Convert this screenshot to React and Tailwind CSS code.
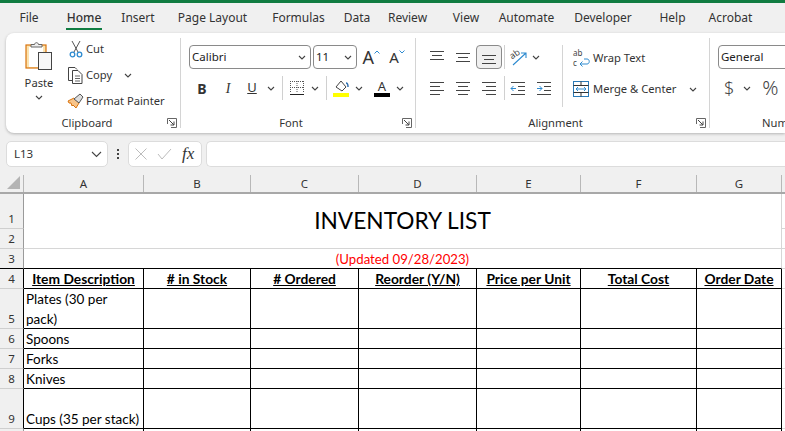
import React from 'react';

const TABS = [
  { label: 'File', cls: 'ml-[20px] w-[18px]' },
  { label: 'Home', cls: 'ml-[28px] w-[36px]', active: true },
  { label: 'Insert', cls: 'ml-[20px] w-[32px]' },
  { label: 'Page Layout', cls: 'ml-[23px] w-[71px]' },
  { label: 'Formulas', cls: 'ml-[22px] w-[57px]' },
  { label: 'Data', cls: 'ml-[18px] w-[24px]' },
  { label: 'Review', cls: 'ml-[18px] w-[41px]' },
  { label: 'View', cls: 'ml-[24px] w-[28px]' },
  { label: 'Automate', cls: 'ml-[21px] w-[51px]' },
  { label: 'Developer', cls: 'ml-[20px] w-[62px]' },
  { label: 'Help', cls: 'ml-[25px] w-[27px]' },
  { label: 'Acrobat', cls: 'ml-[21px] w-[47px]' },
];

const HEADERS = ['# in Stock', '# Ordered', 'Reorder (Y/N)', 'Price per Unit', 'Total Cost', 'Order Date'];

const ROWS = [
  { n: 5, text: 'Plates (30 per pack)', wrap: true },
  { n: 6, text: 'Spoons' },
  { n: 7, text: 'Forks' },
  { n: 8, text: 'Knives' },
  { n: 9, text: 'Cups (35 per stack)' },
];

function Chevron({ className = '' }) {
  return (
    <svg width="8" height="5" viewBox="0 0 8 5" className={`shrink-0 ${className}`}>
      <path d="M1 1l3 3 3-3" fill="none" stroke="#444" strokeWidth="1.1" />
    </svg>
  );
}

function Launcher() {
  return (
    <svg width="10" height="10" viewBox="0 0 10 10" className="absolute right-[3px] top-[5px]">
      <path d="M.5 6V.5H9.500V9.500H4" fill="none" stroke="#666" />
      <path d="M2 2l5 5M7 3.500V7H3.500" fill="none" stroke="#444" />
    </svg>
  );
}

function Lines({ rows }) {
  return (
    <svg width="16" height="16" viewBox="0 0 16 16">
      {rows.map(([x1, x2, y]) => (
        <path key={y} d={`M${x1} ${y}.5H${x2}`} stroke="#444" />
      ))}
    </svg>
  );
}

function GroupLabel({ label, launcher = true, className = '' }) {
  return (
    <div className={`relative h-[20px] shrink-0 text-[11.2px] leading-[20px] text-[#333] ${className}`}>
      {label}
      {launcher && <Launcher />}
    </div>
  );
}

function Clipboard() {
  return (
    <div className="flex h-full w-[174px] shrink-0 flex-col">
      <div className="flex min-h-0 flex-1">
        <div className="ml-[16px] flex w-[34px] flex-col items-center pt-[8px]">
          <svg width="28" height="29" viewBox="0 0 28 29">
            <rect x="1" y="4" width="20" height="23" fill="#fbe3b0" stroke="#d9730d" strokeWidth="1.2" />
            <rect x="4" y="6" width="14" height="20" fill="#fff" />
            <path d="M6 6V3.500h3.500c.5-2.500 3.500-2.500 4 0H17V6z" fill="#eee" stroke="#666" />
            <rect x="13.500" y="11.500" width="13" height="17" fill="#f7f7f7" stroke="#444" />
          </svg>
          <span className="mt-[5px] text-[11.2px] leading-[16px] text-[#333]">Paste</span>
          <Chevron className="mt-[4px]" />
        </div>
        <div className="ml-[13px] flex flex-col pt-[3px] text-[11.2px] text-[#333]">
          <div className="flex h-[26px] shrink-0 items-center">
            <svg width="14" height="18" viewBox="0 0 14 18" className="mr-[3px]">
              <path d="M3 1l6 11M11 1L5 12" stroke="#555" fill="none" />
              <circle cx="3.500" cy="14.500" r="2.300" fill="none" stroke="#2e8bd0" strokeWidth="1.300" />
              <circle cx="10.500" cy="14.500" r="2.300" fill="none" stroke="#2e8bd0" strokeWidth="1.300" />
            </svg>
            Cut
          </div>
          <div className="flex h-[26px] shrink-0 items-center">
            <svg width="15" height="17" viewBox="0 0 15 17" className="mr-[3px] -ml-[1px]">
              <path d="M5 13.500H.5V.5H7l2 2" fill="none" stroke="#444" />
              <path d="M4.500 3.500H10l4 4v9H4.500z" fill="#fff" stroke="#444" />
              <path d="M7 9h5M7 11.500h5M7 14h5" stroke="#666" />
            </svg>
            Copy
            <Chevron className="ml-[12px]" />
          </div>
          <div className="flex h-[26px] shrink-0 items-center">
            <svg width="17" height="16" viewBox="0 0 17 16" className="mr-[2px] -ml-[2px]">
              <path d="M1 8l6-3 5 5-3 5-3-3-1 1-1-3-2 0z" fill="#f7c48a" stroke="#d9730d" />
              <path d="M7 6l6-5 3 3-4 6z" fill="#ddd" stroke="#555" />
            </svg>
            Format Painter
          </div>
        </div>
      </div>
      <GroupLabel label="Clipboard" className="pr-[12px] text-center" />
    </div>
  );
}

function Divider() {
  return <div className="my-[5px] w-px shrink-0 bg-[#d4d4d4]" />;
}

function InnerSep() {
  return <div className="ml-[7px] mr-[5px] h-[24px] w-px shrink-0 bg-[#d0d0d0]" />;
}

function Combo({ children, className = '' }) {
  return (
    <div className={`flex h-[24px] items-center justify-between rounded-[4px] border border-[#8a8a8a] pl-[2px] pr-[4px] text-[11.5px] text-[#222] ${className}`}>
      {children}
    </div>
  );
}

function Font() {
  return (
    <div className="flex h-full w-[234px] shrink-0 flex-col">
      <div className="min-h-0 flex-1 pl-[8px] pt-[12px]">
        <div className="flex items-center">
          <Combo className="w-[123px]">
            Calibri
            <Chevron />
          </Combo>
          <Combo className="ml-[2px] w-[44px]">
            11
            <Chevron />
          </Combo>
          <div className="ml-[6px] flex w-[27px] items-start text-[18px] leading-[22px] text-[#333]">
            A
            <svg width="6" height="4" viewBox="0 0 6 4" className="mt-[4px]">
              <path d="M.5 3.500L3 1l2.500 2.500" fill="none" stroke="#2e8bd0" />
            </svg>
          </div>
          <div className="flex w-[26px] items-start text-[15px] leading-[22px] text-[#333]">
            A
            <svg width="6" height="4" viewBox="0 0 6 4" className="mt-[4px]">
              <path d="M.5.5L3 3 5.500.5" fill="none" stroke="#2e8bd0" />
            </svg>
          </div>
        </div>
        <div className="mt-[7px] flex h-[24px] items-center text-[#333]">
          <span className="w-[26px] text-center text-[14px] font-bold">B</span>
          <span className="w-[26px] text-center font-['Liberation_Serif',serif] text-[14px] italic">I</span>
          <span className="ml-[2px] w-[18px] text-center text-[13px] underline">U</span>
          <Chevron className="ml-[6px]" />
          <InnerSep />
          <svg width="16" height="16" viewBox="0 0 16 16" className="ml-[1px]">
            <path d="M1.500 1v12M8 1v12M14.500 1v12M1 1.500h14M1 7.500h14" stroke="#555" strokeDasharray="1 1" />
            <path d="M1 14.500h14" stroke="#222" />
          </svg>
          <Chevron className="ml-[6px]" />
          <InnerSep />
          <svg width="17" height="18" viewBox="0 0 17 18" className="ml-[1px]">
            <path d="M3 8l5-6 5 6-4 4z" fill="none" stroke="#444" />
            <path d="M13 4c2 0 2 2 2 4" fill="none" stroke="#2e6fb0" strokeWidth="1.500" />
            <rect x="0" y="14" width="16" height="4" fill="#ffff00" />
          </svg>
          <Chevron className="ml-[5px]" />
          <div className="ml-[11px] flex w-[16px] flex-col items-center">
            <span className="text-[13px] leading-[14px]">A</span>
            <span className="h-[4px] w-[16px] bg-black" />
          </div>
          <Chevron className="ml-[6px]" />
        </div>
      </div>
      <GroupLabel label="Font" className="pr-[14px] text-center" />
    </div>
  );
}

function AlignBtn({ rows, selected }) {
  return (
    <div className={`flex h-[24px] w-[26px] items-center justify-center ${selected ? 'rounded-[4px] border border-[#8a8a8a] bg-[#f0f0f0]' : ''}`}>
      <Lines rows={rows} />
    </div>
  );
}

function Alignment() {
  return (
    <div className="flex h-full w-[293px] shrink-0 flex-col">
      <div className="flex min-h-0 flex-1 pl-[8px] pt-[12px]">
        <div className="w-[138px]">
          <div className="flex items-center">
            <AlignBtn rows={[[1, 15, 2], [3, 13, 6], [1, 15, 10]]} />
            <AlignBtn rows={[[1, 15, 4], [3, 13, 8], [1, 15, 12]]} />
            <AlignBtn selected rows={[[1, 15, 6], [3, 13, 10], [1, 15, 14]]} />
            <div className="ml-[2px] mr-[5px] h-[24px] w-px bg-[#d0d0d0]" />
            <svg width="18" height="18" viewBox="0 0 18 18" className="overflow-visible">
              <text x="1" y="10" fontSize="9" fill="#444" transform="rotate(-35 4 9)" fontFamily="Noto Sans">ab</text>
              <path d="M3 17L16 5M11 5h5v5" fill="none" stroke="#2e8bd0" strokeWidth="1.100" />
            </svg>
            <Chevron className="ml-[4px]" />
          </div>
          <div className="mt-[7px] flex items-center">
            <AlignBtn rows={[[1, 15, 2], [1, 11, 6], [1, 15, 10], [1, 11, 14]]} />
            <AlignBtn rows={[[1, 15, 2], [3, 13, 6], [1, 15, 10], [3, 13, 14]]} />
            <AlignBtn rows={[[1, 15, 2], [5, 15, 6], [1, 15, 10], [5, 15, 14]]} />
            <div className="ml-[2px] mr-[5px] h-[24px] w-px bg-[#d0d0d0]" />
            <svg width="16" height="16" viewBox="0 0 16 16">
              <path d="M1 2.500h14M8 6.500h7M8 10.500h7M1 14.500h14" stroke="#444" />
              <path d="M6 8.500H1M3.500 6L1 8.500 3.500 11" fill="none" stroke="#2e8bd0" />
            </svg>
            <svg width="16" height="16" viewBox="0 0 16 16" className="ml-[10px]">
              <path d="M1 2.500h14M8 6.500h7M8 10.500h7M1 14.500h14" stroke="#444" />
              <path d="M1 8.500h5M3.500 6L6 8.500 3.500 11" fill="none" stroke="#2e8bd0" />
            </svg>
          </div>
        </div>
        <div className="h-[62px] w-px bg-[#d4d4d4]" />
        <div className="ml-[10px] pt-[1px] text-[11.2px] text-[#333]">
          <div className="flex h-[24px] items-center">
            <svg width="18" height="18" viewBox="0 0 18 18" className="mr-[2px] overflow-visible">
              <text x="0" y="7" fontSize="8" fill="#444" fontFamily="Noto Sans">ab</text>
              <text x="0" y="17" fontSize="8" fill="#444" fontFamily="Noto Sans">c</text>
              <path d="M7 15h7c3 0 3-5 0-5h-3M9.500 12.500L7 15l2.500 2.500" fill="none" stroke="#2e8bd0" />
            </svg>
            Wrap Text
          </div>
          <div className="mt-[7px] flex h-[24px] items-center">
            <svg width="16" height="16" viewBox="0 0 16 16" className="mr-[4px]">
              <rect x=".5" y=".5" width="15" height="15" fill="none" stroke="#2a7ab8" />
              <path d="M.5 4.500h15M.5 11.500h15M8 .5v4M8 11.500v4" stroke="#333" />
              <path d="M3 8h10M5 6L3 8l2 2M11 6l2 2-2 2" fill="none" stroke="#2e8bd0" />
            </svg>
            Merge &amp; Center
            <Chevron className="ml-[13px]" />
          </div>
        </div>
      </div>
      <GroupLabel label="Alignment" className="pr-[14px] text-center" />
    </div>
  );
}

function NumberGroup() {
  return (
    <div className="flex h-full w-[90px] shrink-0 flex-col overflow-hidden">
      <div className="min-h-0 flex-1 pl-[8px] pt-[12px]">
        <Combo className="w-[120px]">General</Combo>
        <div className="mt-[7px] flex h-[24px] items-center text-[#444]">
          <span className="ml-[6px] text-[18px] font-light">$</span>
          <Chevron className="ml-[9px]" />
          <span className="ml-[11px] text-[20px] font-light">%</span>
        </div>
      </div>
      <GroupLabel label="Number" launcher={false} className="w-[100px] pl-[52px]" />
    </div>
  );
}

function FormulaBar() {
  return (
    <div className="mt-[8px] flex h-[26px] items-stretch pl-[6px]">
      <div className="flex w-[102px] items-center justify-between rounded-[5px] border border-[#dcdcdc] bg-white pl-[7px] pr-[5px] text-[11.5px] text-[#333]">
        L13
        <svg width="11" height="7" viewBox="0 0 11 7">
          <path d="M1 1l4.500 4.500L10 1" fill="none" stroke="#444" strokeWidth="1.100" />
        </svg>
      </div>
      <div className="flex w-[20px] flex-col items-center justify-center gap-[2px]">
        <span className="size-[2px] bg-[#444]" />
        <span className="size-[2px] bg-[#444]" />
        <span className="size-[2px] bg-[#444]" />
      </div>
      <div className="flex w-[74px] items-center rounded-[5px] border border-[#dcdcdc] bg-white pl-[6px]">
        <svg width="12" height="12" viewBox="0 0 12 12">
          <path d="M.5.5l11 11M11.500.5l-11 11" stroke="#bcbcbc" />
        </svg>
        <svg width="15" height="12" viewBox="0 0 15 12" className="ml-[10px]">
          <path d="M1 6l4 5L14 1" fill="none" stroke="#bcbcbc" />
        </svg>
        <span className="ml-[10px] font-['Liberation_Serif',serif] text-[17px] italic text-[#333]">fx</span>
      </div>
      <div className="ml-[4px] flex-1 rounded-l-[5px] border border-r-0 border-[#dcdcdc] bg-white" />
    </div>
  );
}

function ColHeader({ label }) {
  return (
    <div className="flex items-center justify-center border-r border-[#b8b8b8] text-[11.5px] text-[#333]">
      {label}
    </div>
  );
}

function RowNum({ n, className = '' }) {
  return (
    <div className={`flex items-end justify-center border-b border-r border-b-[#cfcfcf] border-r-[#9a9a9a] bg-[#f0f0f0] pb-[1px] text-[11.5px] leading-[16px] text-[#333] ${className}`}>
      {n}
    </div>
  );
}

function Sheet() {
  const cols = 'grid-cols-[24px_120px_107px_108px_118px_104px_116px_85px_1fr]';
  const headerCell = "flex items-end justify-center border-b border-r border-black font-['Lato',sans-serif] text-[13.8px] font-bold leading-[18px] text-black underline";
  return (
    <div className="mt-[8px] flex-1 overflow-hidden">
      {/* column letters */}
      <div className={`grid h-[19px] border-b-2 border-[#a8a8a8] ${cols}`}>
        <div className="flex items-end justify-end border-r border-[#b8b8b8] pb-[3px] pr-[3px]">
          <svg width="13" height="13" viewBox="0 0 13 13">
            <path d="M13 0v13H0z" fill="#b4b4b4" />
          </svg>
        </div>
        {['A', 'B', 'C', 'D', 'E', 'F', 'G'].map(c => (
          <ColHeader key={c} label={c} />
        ))}
      </div>

      {/* title rows */}
      <div className={`grid bg-white grid-rows-[35px_20px_20px] ${cols}`}>
        <RowNum n={1} className="col-start-1 row-start-1" />
        <RowNum n={2} className="col-start-1 row-start-2" />
        <RowNum n={3} className="col-start-1 row-start-3 border-b-black" />
        <div className="col-span-7 col-start-2 row-span-2 row-start-1 flex items-end justify-center border-b border-r border-[#d6d6d6] pb-[12px] font-['Lato',sans-serif] text-[22.7px] leading-[30px] text-black">
          INVENTORY LIST
        </div>
        <div className="col-span-7 col-start-2 row-start-3 flex items-end justify-center border-b border-r border-b-black border-r-[#d6d6d6] font-['Lato',sans-serif] text-[13.2px] leading-[18px] text-[#ff0000]">
          (Updated 09/28/2023)
        </div>
        <div className="col-start-9 row-start-1 border-b border-[#d6d6d6]" />
        <div className="col-start-9 row-start-2 border-b border-[#d6d6d6]" />
        <div className="col-start-9 row-start-3 border-b border-[#d6d6d6]" />
      </div>

      {/* table */}
      <div className={`grid bg-white grid-rows-[20px_40px_20px_20px_20px_40px_20px] ${cols}`}>
        <RowNum n={4} className="border-r-black" />
        <div className={headerCell}>Item Description</div>
        {HEADERS.map(h => (
          <div key={h} className={headerCell}>{h}</div>
        ))}
        <div className="border-b border-[#d6d6d6]" />

        {ROWS.map(row => (
          <React.Fragment key={row.n}>
            <RowNum n={row.n} className="border-r-black" />
            <div className="flex items-end border-b border-r border-black pl-[2px] font-['Lato',sans-serif] text-[13.5px] leading-[20px] text-black">
              <span className={`-mb-px ${row.wrap ? 'w-[100px]' : 'whitespace-nowrap'}`}>{row.text}</span>
            </div>
            {HEADERS.map(h => (
              <div key={h} className="border-b border-r border-black" />
            ))}
            <div className="border-b border-[#d6d6d6]" />
          </React.Fragment>
        ))}

        <RowNum n="" />
        {[1, 2, 3, 4, 5, 6, 7].map(i => (
          <div key={i} className="border-r border-black" />
        ))}
      </div>
    </div>
  );
}

export default function App() {
  return (
    <div className="flex h-[431px] w-[785px] flex-col overflow-hidden bg-[#f0f0f0] font-['Noto_Sans',sans-serif]">
      <div className="h-[3px] shrink-0 bg-[#107c41]" />
      <nav className="flex h-[30px] shrink-0 items-start text-[12px] text-[#333]">
        {TABS.map(tab => (
          <div key={tab.label} className={`relative flex h-[27px] items-center justify-center whitespace-nowrap pt-[3px] ${tab.cls} ${tab.active ? 'font-medium' : ''}`}>
            {tab.label}
            {tab.active && <span className="absolute bottom-0 left-0 right-0 h-[2px] bg-[#107c41]" />}
          </div>
        ))}
      </nav>
      <div className="ml-[6px] flex h-[100px] shrink-0 overflow-hidden rounded-l-[8px] bg-white shadow-[0_1px_3px_rgba(0,0,0,0.25)]">
        <Clipboard />
        <Divider />
        <Font />
        <Divider />
        <Alignment />
        <Divider />
        <NumberGroup />
      </div>
      <FormulaBar />
      <Sheet />
    </div>
  );
}
